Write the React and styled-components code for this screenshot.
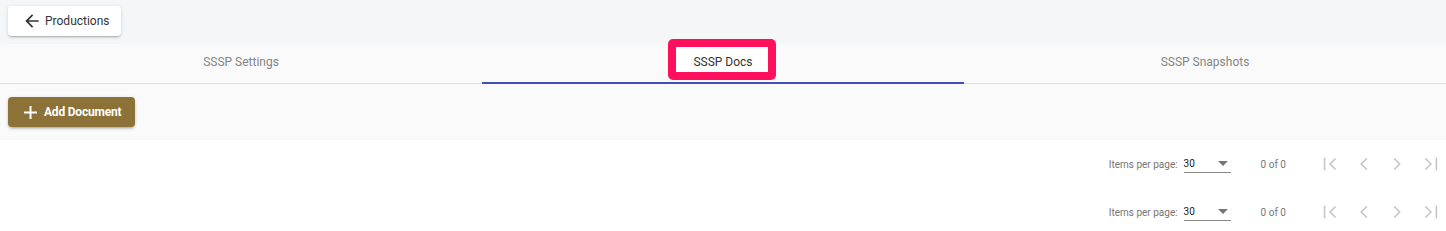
import React from "react";
import styled, { createGlobalStyle } from "styled-components";

const Global = createGlobalStyle`
  html, body { margin: 0; padding: 0; background: #ffffff; }
  body { font-family: Roboto, "Liberation Sans", Arial, sans-serif; }
  * { box-sizing: border-box; }
`;

const Page = styled.div`
  width: 1446px;
  display: flex;
  flex-direction: column;
`;

const TopBar = styled.div`
  background: #f5f6f8;
  height: 44px;
  padding: 6px 8px 0;
  display: flex;
  align-items: flex-start;
`;

const BackButton = styled.button`
  height: 30px;
  width: 113px;
  display: flex;
  align-items: center;
  gap: 3px;
  padding: 0 0 0 14px;
  border: none;
  border-radius: 4px;
  background: #ffffff;
  box-shadow: 0 2px 2px -1px rgba(0,0,0,0.25), 0 1px 4px rgba(0,0,0,0.12);
  font-family: Roboto, "Liberation Sans", Arial, sans-serif;
  font-size: 12px;
  color: #333333;
  cursor: pointer;
`;

const TabHeader = styled.div`
  background: #fafafa;
  height: 40px;
  display: flex;
  border-bottom: 1px solid #dedede;
`;

const Tab = styled.div`
  flex: 1;
  position: relative;
  display: flex;
  align-items: center;
  justify-content: center;
  padding-bottom: 4px;
  font-size: 12px;
  color: ${(p) => (p.$active ? "#333333" : "#858585")};
  &::after {
    content: "";
    display: ${(p) => (p.$active ? "block" : "none")};
    position: absolute;
    left: 0;
    right: 0;
    bottom: -1px;
    height: 2px;
    background: #3f51b5;
  }
`;

const Label = styled.span`
  position: relative;
  z-index: 0;
  line-height: 14px;
`;

const Highlight = styled.span`
  position: absolute;
  left: -25px;
  right: -23px;
  top: -16px;
  bottom: -11px;
  border: 8px solid #fe105c;
  border-radius: 5px;
  z-index: -1;
  background: #ffffff;
`;

const LabelText = styled.span`
  position: relative;
`;

const Toolbar = styled.div`
  background: #fafafa;
  height: 56px;
  padding: 13px 8px 0;
  display: flex;
  align-items: flex-start;
`;

const AddButton = styled.button`
  height: 30px;
  width: 127px;
  display: flex;
  align-items: center;
  gap: 7px;
  padding: 0 0 0 16px;
  border: none;
  border-radius: 4px;
  background: #8c7236;
  color: #ffffff;
  box-shadow: 0 2px 3px -1px rgba(0,0,0,0.3), 0 1px 4px rgba(0,0,0,0.12);
  font-family: Roboto, "Liberation Sans", Arial, sans-serif;
  font-size: 12px;
  font-weight: 700;
  letter-spacing: -0.2px;
  cursor: pointer;
`;

const Paginator = styled.div`
  height: 48px;
  display: flex;
  align-items: center;
  justify-content: flex-end;
  background: #ffffff;
  font-size: 10px;
  color: #757575;
`;

const PageSizeLabel = styled.span`
  margin-right: 6px;
`;

const Select = styled.div`
  width: 47px;
  height: 18px;
  display: flex;
  align-items: center;
  justify-content: space-between;
  border-bottom: 1px solid #8a8a8a;
  color: #222222;
  font-size: 10px;
  padding-right: 3px;
`;

const Caret = styled.span`
  width: 0;
  height: 0;
  border-left: 5px solid transparent;
  border-right: 5px solid transparent;
  border-top: 5px solid #757575;
`;

const RangeLabel = styled.span`
  margin: 0 28px 0 30px;
`;

const NavButton = styled.button`
  width: 33px;
  height: 33px;
  padding: 0;
  border: none;
  background: transparent;
  display: flex;
  align-items: center;
  justify-content: center;
  color: #c4c4c4;
`;

const Icon = ({ d, size = 24 }) => (
  <svg width={size} height={size} viewBox="0 0 24 24" fill="currentColor">
    <path d={d} />
  </svg>
);

const ThinIcon = ({ kind }) => {
  const paths = {
    first: (
      <>
        <line x1="5" y1="5" x2="5" y2="19" />
        <polyline points="17,6 11,12 17,18" />
      </>
    ),
    prev: <polyline points="15,6 9,12 15,18" />,
    next: <polyline points="9,6 15,12 9,18" />,
    last: (
      <>
        <line x1="19" y1="5" x2="19" y2="19" />
        <polyline points="7,6 13,12 7,18" />
      </>
    ),
  };
  return (
    <svg width="22" height="22" viewBox="0 0 24 24" fill="none" stroke="currentColor" strokeWidth="1.7">
      {paths[kind]}
    </svg>
  );
};

const PaginatorRow = () => (
  <Paginator>
    <PageSizeLabel>Items per page:</PageSizeLabel>
    <Select>
      <span>30</span>
      <Caret />
    </Select>
    <RangeLabel>0 of 0</RangeLabel>
    <NavButton><ThinIcon kind="first" /></NavButton>
    <NavButton><ThinIcon kind="prev" /></NavButton>
    <NavButton><ThinIcon kind="next" /></NavButton>
    <NavButton><ThinIcon kind="last" /></NavButton>
  </Paginator>
);

export default function App() {
  return (
    <Page>
      <Global />
      <TopBar>
        <BackButton>
          <Icon size={20} d="M20 11H7.83l5.59-5.59L12 4l-8 8 8 8 1.41-1.41L7.83 13H20v-2z" />
          Productions
        </BackButton>
      </TopBar>
      <TabHeader>
        <Tab>SSSP Settings</Tab>
        <Tab $active>
          <Label>
            <Highlight />
            <LabelText>SSSP Docs</LabelText>
          </Label>
        </Tab>
        <Tab>SSSP Snapshots</Tab>
      </TabHeader>
      <Toolbar>
        <AddButton>
          <svg width="13" height="13" viewBox="0 0 13 13" stroke="#fff" strokeWidth="2">
            <line x1="6.5" y1="0" x2="6.5" y2="13" />
            <line x1="0" y1="6.5" x2="13" y2="6.5" />
          </svg>
          Add Document
        </AddButton>
      </Toolbar>
      <PaginatorRow />
      <PaginatorRow />
    </Page>
  );
}
